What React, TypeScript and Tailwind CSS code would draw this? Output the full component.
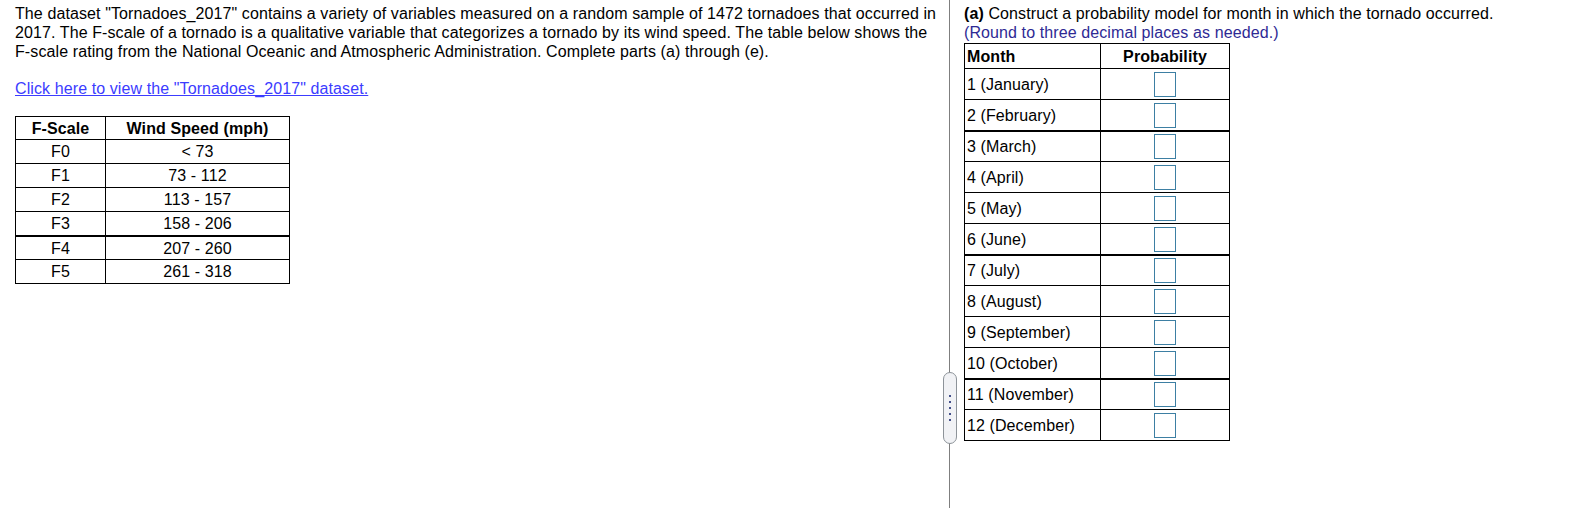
import React from "react";

const fRows: [string, string][] = [
  ["F0", "< 73"],
  ["F1", "73 - 112"],
  ["F2", "113 - 157"],
  ["F3", "158 - 206"],
  ["F4", "207 - 260"],
  ["F5", "261 - 318"],
];

const months = [
  "1 (January)",
  "2 (February)",
  "3 (March)",
  "4 (April)",
  "5 (May)",
  "6 (June)",
  "7 (July)",
  "8 (August)",
  "9 (September)",
  "10 (October)",
  "11 (November)",
  "12 (December)",
];

export default function App() {
  return (
    <div className="flex w-[1581px] h-[508px] bg-white text-black font-['Liberation_Sans',Arial,sans-serif] text-[16px] leading-[19px] tracking-[0.1px]">
      {/* Left panel */}
      <div className="w-[949px] shrink-0 pl-[15px] pr-[8px] pt-[4px]">
        <p>
          The dataset "Tornadoes_2017" contains a variety of variables measured on a random sample of 1472 tornadoes that occurred in 2017. The F-scale of a tornado is a qualitative variable that categorizes a tornado by its wind speed. The table below shows the{" "}
          <span className="whitespace-nowrap">F-scale</span> rating from the National Oceanic and Atmospheric Administration. Complete parts (a) through (e).
        </p>
        <p className="mt-[18px]">
          <a className="underline text-[#3c3cff] cursor-pointer">Click here to view the "Tornadoes_2017" dataset.</a>
        </p>
        <div className="mt-[18px] w-[275px] border border-black">
          <div className="flex h-[22px] items-center font-bold">
            <div className="w-[89px] text-center">F-Scale</div>
            <div className="flex-1 h-full flex items-center justify-center border-l border-black">Wind Speed (mph)</div>
          </div>
          {fRows.map(([a, b], i) => (
            <div
              key={a}
              className={
                i === 4
                  ? "flex h-[24px] border-t-2 border-black"
                  : "flex h-[24px] border-t border-black"
              }
            >
              <div className="w-[89px] flex items-center justify-center">{a}</div>
              <div className="flex-1 flex items-center justify-center border-l border-black">{b}</div>
            </div>
          ))}
        </div>
      </div>

      {/* Divider */}
      <div className="relative w-px shrink-0 bg-[#7f7f7f]">
        <div className="absolute left-[-6px] top-[372px] w-[14px] h-[72px] rounded-full border border-[#8d9399] bg-[#f1f2f5] flex flex-col items-center justify-center gap-[4px]">
          <span className="block w-[2px] h-[2px] bg-[#44508a]" />
          <span className="block w-[2px] h-[2px] bg-[#44508a]" />
          <span className="block w-[2px] h-[2px] bg-[#44508a]" />
          <span className="block w-[2px] h-[2px] bg-[#44508a]" />
          <span className="block w-[2px] h-[2px] bg-[#44508a]" />
        </div>
      </div>

      {/* Right panel */}
      <div className="pl-[14px] pt-[4px]">
        <p>
          <span className="font-bold">(a)</span> Construct a probability model for month in which the tornado occurred.
        </p>
        <p className="text-[#2e2a94]">(Round to three decimal places as needed.)</p>
        <div className="mt-[1px] w-[266px] border border-black">
          <div className="flex h-[24px] font-bold">
            <div className="w-[135px] pl-[2px] flex items-center">Month</div>
            <div className="flex-1 flex items-center justify-center border-l border-black">Probability</div>
          </div>
          {months.map((m, i) => (
            <div
              key={m}
              className={
                i === 2 || i === 6 || i === 10
                  ? "flex h-[31px] border-t-2 border-black"
                  : "flex h-[31px] border-t border-black"
              }
            >
              <div className="w-[135px] pl-[2px] flex items-center">{m}</div>
              <div className="flex-1 flex items-center justify-center border-l border-black">
                <div className="w-[22px] h-[25px] border border-[#3d7fa3] bg-white" />
              </div>
            </div>
          ))}
        </div>
      </div>
    </div>
  );
}
